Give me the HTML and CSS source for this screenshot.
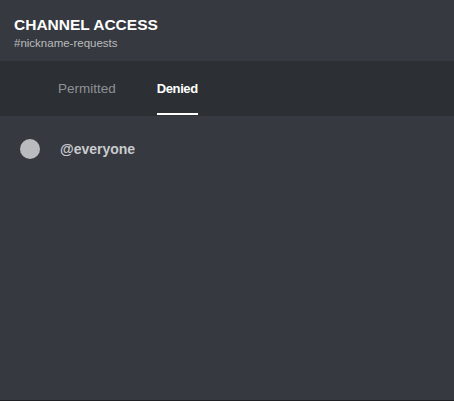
FILE: index.html
```html
<!DOCTYPE html>
<html>
<head>
<meta charset="utf-8">
<link rel="stylesheet" href="styles.css">
</head>
<body>
<div class="page">
  <header class="head">
    <div class="title">CHANNEL ACCESS</div>
    <div class="subtitle">#nickname-requests</div>
  </header>
  <nav class="tabs">
    <div class="tab">Permitted</div>
    <div class="tab active">Denied</div>
  </nav>
  <div class="list">
    <div class="row">
      <span class="dot"></span>
      <span class="name">@everyone</span>
    </div>
  </div>
</div>
</body>
</html>
```
FILE: styles.css
```css
html, body {
  margin: 0;
  padding: 0;
  background: #36393f;
}
.page {
  width: 454px;
  height: 400px;
  display: flex;
  flex-direction: column;
  font-family: "Liberation Sans", Arial, sans-serif;
  border-bottom: 1px solid #1e2024;
}
.head {
  height: 61px;
  box-sizing: border-box;
  padding: 15px 14px 0;
  background: #36393f;
}
.title {
  color: #ffffff;
  font-weight: bold;
  font-size: 15.5px;
  line-height: 19px;
}
.subtitle {
  color: #b9bbbe;
  font-size: 11.5px;
  line-height: 15px;
  margin-top: 2px;
}
.tabs {
  height: 55px;
  display: flex;
  gap: 41px;
  padding-left: 58px;
  background: #2c2f33;
}
.tab {
  display: flex;
  align-items: center;
  box-sizing: border-box;
  padding-top: 2px;
  border-bottom: 2px solid transparent;
  margin-bottom: 1px;
  color: #8e9297;
  font-size: 13.5px;
  font-weight: normal;
}
.tab.active {
  color: #ffffff;
  font-weight: bold;
  font-size: 13px;
  letter-spacing: -0.4px;
  border-bottom-color: #ffffff;
}
.list {
  flex: 1;
  padding: 23px 20px 0;
}
.row {
  display: flex;
  align-items: center;
  gap: 20px;
  height: 20px;
}
.dot {
  width: 20px;
  height: 20px;
  border-radius: 50%;
  background: #b9bbbe;
}
.name {
  color: #c9cbce;
  font-size: 14px;
  font-weight: 600;
}
```
